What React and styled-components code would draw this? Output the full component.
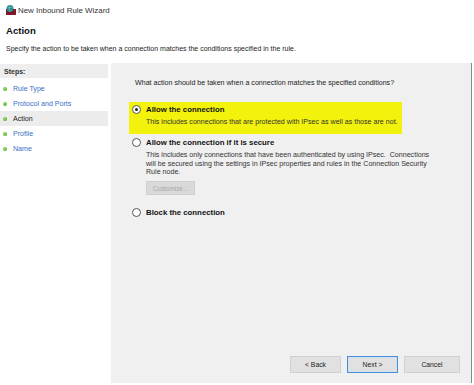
import * as React from "react";
import styled, { createGlobalStyle } from "styled-components";

const Global = createGlobalStyle`
  html, body { margin: 0; padding: 0; background: #fff; }
  body { font-family: "Liberation Sans", Arial, sans-serif; }
`;

const Window = styled.div`
  width: 474px;
  height: 385px;
  display: flex;
  flex-direction: column;
  background: #fff;
  overflow: hidden;
`;

const TitleBar = styled.div`
  height: 20px;
  display: flex;
  align-items: center;
  gap: 1px;
  padding-left: 5px;
  font-size: 7.9px;
  color: #333;
`;

const Header = styled.div`
  height: 43px;
  padding: 0 6px;
  display: flex;
  flex-direction: column;
`;

const Heading = styled.div`
  margin-top: 5px;
  line-height: 12px;
  font-size: 9.6px;
  font-weight: 700;
  color: #111;
`;

const SubTitle = styled.div`
  margin-top: 6.5px;
  line-height: 9px;
  font-size: 7px;
  color: #222;
`;

const Body = styled.div`
  flex: 1;
  display: flex;
  padding-bottom: 2px;
`;

const Sidebar = styled.div`
  width: 108px;
  display: flex;
  flex-direction: column;
`;

const StepsHeader = styled.div`
  height: 14px;
  margin-top: 1px;
  background: #eeeeee;
  display: flex;
  align-items: center;
  padding-left: 4px;
  font-size: 7px;
  font-weight: 700;
  color: #333;
  margin-bottom: 3px;
`;

const Step = styled.div`
  height: 15px;
  display: flex;
  align-items: center;
  gap: 6px;
  padding-left: 3px;
  font-size: 7.1px;
  color: ${(p) => (p.current ? "#222" : "#3a6fc4")};
  background: ${(p) => (p.current ? "#ececec" : "transparent")};
`;

const Dot = styled.span`
  width: 4px;
  height: 4px;
  border-radius: 50%;
  background: radial-gradient(circle at 35% 35%, #9be06a, #3f9a1c);
`;

const Main = styled.div`
  flex: 1;
  margin-left: 3px;
  margin-right: 2px;
  background: #f0f0f0;
  border-right: 1px solid #8a8a8a;
  display: flex;
  flex-direction: column;
  padding: 16px 0 10px 24px;
`;

const Question = styled.div`
  font-size: 7.1px;
  line-height: 9px;
  color: #222;
  margin-bottom: 14px;
`;

const Option = styled.div`
  display: flex;
  flex-direction: column;
  box-sizing: border-box;
  width: 273px;
  margin-left: -6px;
  padding: 3px 4px ${(p) => (p.highlight ? 8 : 5)}px 3px;
  background: ${(p) => (p.highlight ? "#f2f20c" : "transparent")};
  margin-bottom: ${(p) => p.gap || 0}px;
`;

const RadioRow = styled.div`
  display: flex;
  align-items: center;
  gap: 5px;
  height: 9px;
  font-size: 7.8px;
  font-weight: 700;
  color: #111;
  white-space: nowrap;
`;

const Radio = styled.span`
  width: 7px;
  height: 7px;
  flex: none;
  border-radius: 50%;
  border: 1px solid #555;
  background: #fff;
  display: flex;
  align-items: center;
  justify-content: center;
  &::after {
    content: "";
    width: 3px;
    height: 3px;
    border-radius: 50%;
    background: ${(p) => (p.checked ? "#222" : "transparent")};
  }
`;

const Desc = styled.div`
  margin: 4px 0 0 14px;
  font-size: 7.1px;
  line-height: 8.4px;
  color: #333;
  white-space: ${(p) => (p.wrap ? "normal" : "nowrap")};
  width: ${(p) => p.width || "auto"};
`;

const SmallButton = styled.div`
  margin: 4.5px 0 0 14px;
  width: 49px;
  height: 14px;
  background: #d9d9d9;
  border: 1px solid #cfcfcf;
  box-sizing: border-box;
  display: flex;
  align-items: center;
  justify-content: center;
  font-size: 6.4px;
  color: #a8a8a8;
`;

const Footer = styled.div`
  margin-top: auto;
  display: flex;
  justify-content: flex-end;
  gap: 6px;
  padding-right: 11px;
`;

const Button = styled.div`
  width: ${(p) => p.w || 51}px;
  height: 17px;
  box-sizing: border-box;
  background: #e1e1e1;
  border: 1px solid ${(p) => (p.primary ? "#4a8fd6" : "#d0d0d0")};
  box-shadow: ${(p) => (p.primary ? "inset 0 0 0 1px #cfe2f5" : "none")};
  display: flex;
  align-items: center;
  justify-content: center;
  font-size: 6.8px;
  color: #222;
`;

const FirewallIcon = () => (
  <svg width="12" height="12" viewBox="0 0 12 12">
    <rect x="1" y="5" width="10" height="6" fill="#8c1c2c" />
    <path d="M1 7h10M1 9h10M4 5v2M8 7v2M5 9v2" stroke="#5a0f1a" strokeWidth="0.5" />
    <circle cx="5" cy="4.5" r="3.5" fill="#2a8a8c" />
    <path d="M2.5 3.5c1.5 0.5 3 0.3 5 0M5 1.2c-1 1.5-1 4 0 6.6" stroke="#7fd0c8" strokeWidth="0.6" fill="none" />
  </svg>
);

const steps = ["Rule Type", "Protocol and Ports", "Action", "Profile", "Name"];

export default function App() {
  return (
    <>
      <Global />
      <Window>
        <TitleBar>
          <FirewallIcon />
          <span>New Inbound Rule Wizard</span>
        </TitleBar>
        <Header>
          <Heading>Action</Heading>
          <SubTitle>Specify the action to be taken when a connection matches the conditions specified in the rule.</SubTitle>
        </Header>
        <Body>
          <Sidebar>
            <StepsHeader>Steps:</StepsHeader>
            {steps.map((s) => (
              <Step key={s} current={s === "Action"}>
                <Dot />
                {s}
              </Step>
            ))}
          </Sidebar>
          <Main>
            <Question>What action should be taken when a connection matches the specified conditions?</Question>
            <Option highlight gap={1}>
              <RadioRow>
                <Radio checked />
                Allow the connection
              </RadioRow>
              <Desc>This includes connections that are protected with IPsec as well as those are not.</Desc>
            </Option>
            <Option gap={5}>
              <RadioRow>
                <Radio />
                Allow the connection if it is secure
              </RadioRow>
              <Desc wrap width="290px">
                This includes only connections that have been authenticated by using IPsec.&nbsp; Connections
                <br />
                will be secured using the settings in IPsec properties and rules in the Connection Security
                <br />
                Rule node.
              </Desc>
              <SmallButton>Customize...</SmallButton>
            </Option>
            <Option>
              <RadioRow>
                <Radio />
                Block the connection
              </RadioRow>
            </Option>
            <Footer>
              <Button>&lt; Back</Button>
              <Button primary>Next &gt;</Button>
              <Button w={56}>Cancel</Button>
            </Footer>
          </Main>
        </Body>
      </Window>
    </>
  );
}
